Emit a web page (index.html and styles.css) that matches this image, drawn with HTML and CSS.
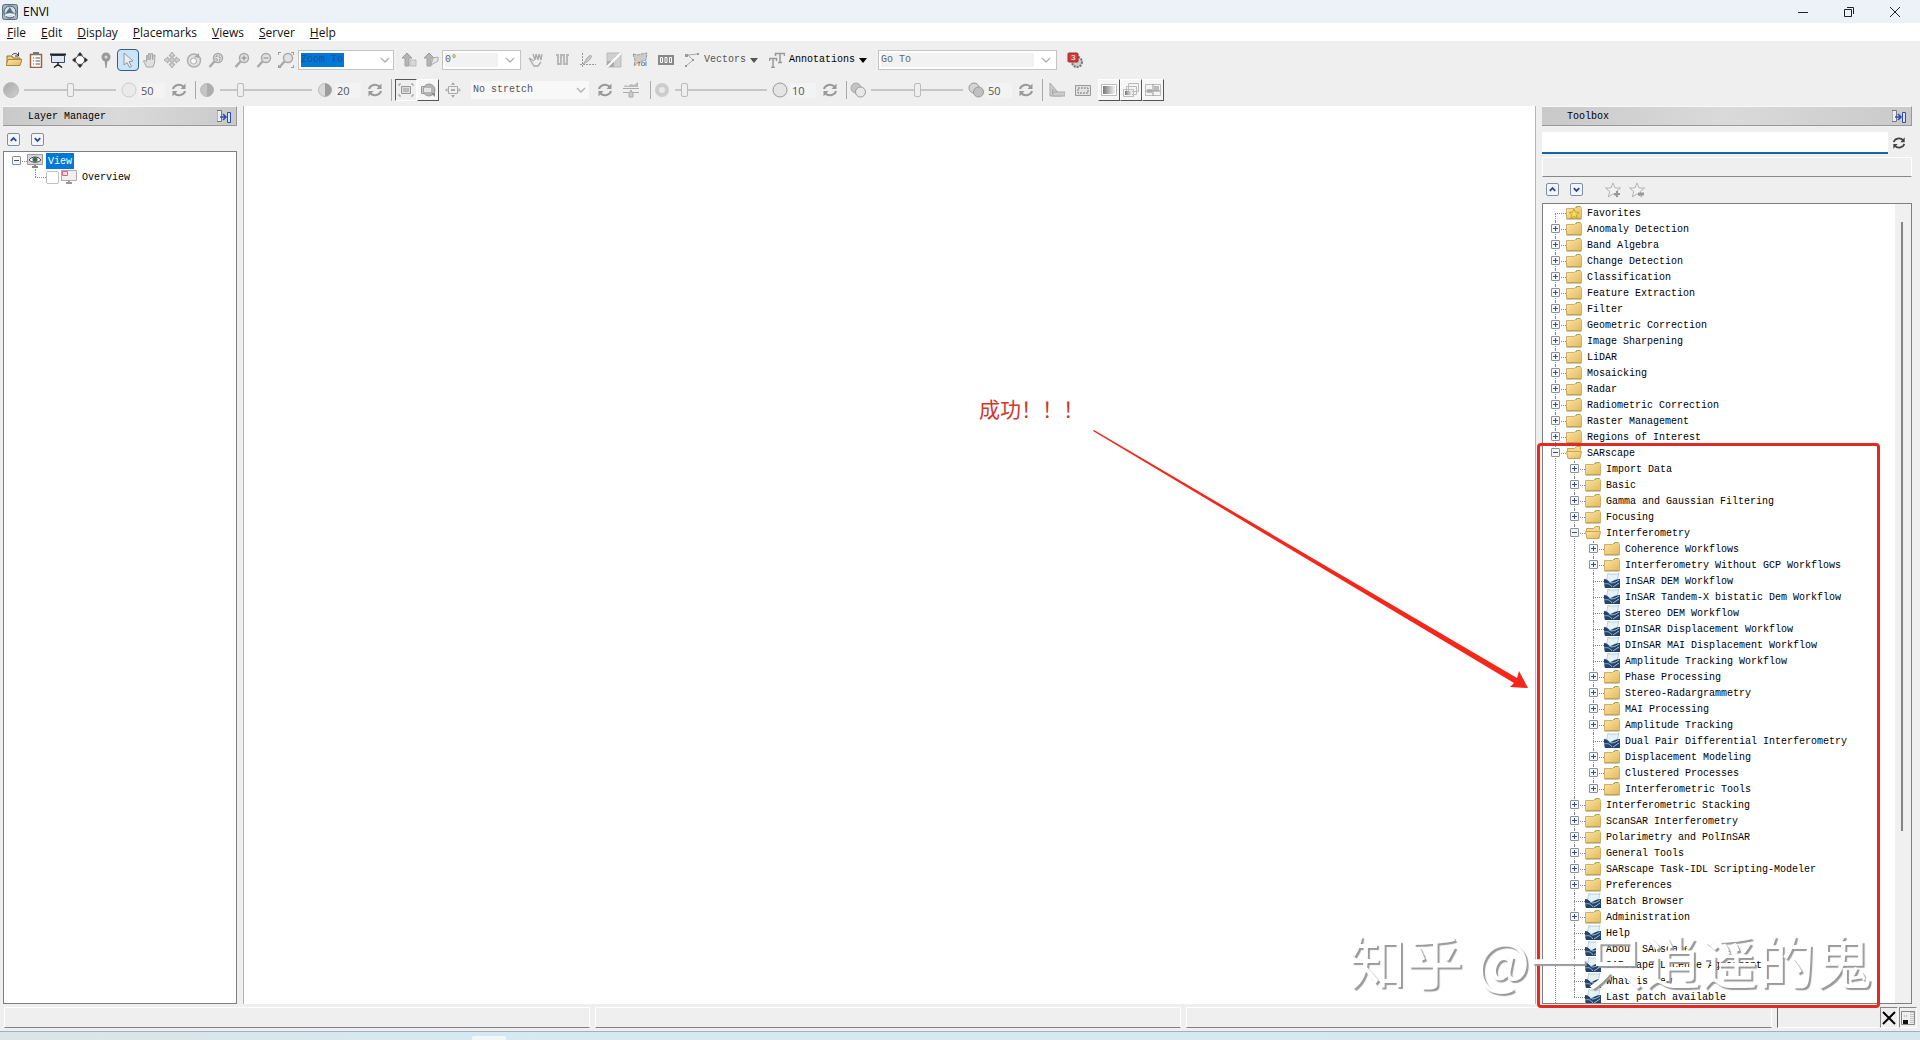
FILE: index.html
```html
<!DOCTYPE html>
<html lang="zh-CN">
<head>
    <meta charset="utf-8">
    <title>ENVI</title>
    <link rel="stylesheet" href="styles.css">
</head>
<body>
    <!-- shared icons -->
    <svg class="sprite" aria-hidden="true">
        <linearGradient id="gold" x1="0" y1="0" x2="1" y2="1"><stop offset="0" stop-color="#fbe7a6"/><stop offset="1" stop-color="#e3b95b"/></linearGradient>
        <linearGradient id="ball" x1="0" y1="0" x2="1" y2="1"><stop offset="0" stop-color="#a8a8a8"/><stop offset="1" stop-color="#d0d0d0"/></linearGradient>
        <linearGradient id="ramp"><stop offset="0" stop-color="#777"/><stop offset="1" stop-color="#f4f4f4"/></linearGradient>
        <symbol id="folder" viewBox="0 0 16 16"><path d="M.5 3.5h8l2-2h4l1 2v10H.5z" fill="url(#gold)" stroke="#d3b06a"/><path d="M10 3l1-1.5h3" fill="none" stroke="#8fae68"/><path d="M.5 14h15" stroke="#a9905a"/></symbol>
        <symbol id="folder-open" viewBox="0 0 16 16"><path d="M1.500 12.500v-9h7l2-2h4v4" fill="#f3d78b" stroke="#c9a254"/><path d="M.5 6.500h15l-1.500 7h-12z" fill="url(#gold)" stroke="#c9a254"/></symbol>
        <symbol id="fav" viewBox="0 0 16 16"><use href="#folder"/><path d="M8 4l1.400 3.200 3.600.3-2.700 2.300.8 3.500L8 11.400l-3.100 1.900.8-3.500L3 7.500l3.600-.3z" fill="#f5dc4a" stroke="#b99a1c" stroke-width=".8"/></symbol>
        <symbol id="tool" viewBox="0 0 16 16"><path d="M4 0l1 1h9l1-1-2 9H2z" fill="#e4f2f6" stroke="#a9c7d2" stroke-width=".8"/><path d="M0 6c3 0 5 2 6 4 2-2 6-4 10-4v9H1c-1-2-1-6-1-9z" fill="#24426c"/><path d="M0 11c4-1 6 0 8 3M7 10c3 0 5-1 8-3M9 14l6-4" stroke="#9ebbd3" fill="none"/></symbol>
        <symbol id="refresh" viewBox="0 0 16 16"><path d="M2 7c1-4 7-6 11-2M14 9c-1 4-7 6-11 2" fill="none" stroke="currentColor" stroke-width="2"/><path d="M14.500 1.500v5.500h-5zM1.500 14.500V9h5z" fill="currentColor"/></symbol>
        <symbol id="lens" viewBox="0 0 16 16"><circle cx="10" cy="6" r="4.500" fill="#e2e2e2" stroke="#a9a9a9" stroke-width="1.500"/><path d="M6.500 9.500L1.500 15" stroke="#a9a9a9" stroke-width="2.500"/></symbol>
        <symbol id="up" viewBox="0 0 12 12"><path d="M3 7.500l3-3 3 3" fill="none" stroke="#2b4a8f" stroke-width="2"/></symbol>
        <symbol id="down" viewBox="0 0 12 12"><path d="M3 4.500l3 3 3-3" fill="none" stroke="#2b4a8f" stroke-width="2"/></symbol>
        <symbol id="chev" viewBox="0 0 12 12"><path d="M2 4l4 4 4-4" fill="none" stroke="#b0b0b0" stroke-width="1.300"/></symbol>
        <symbol id="arrow-up" viewBox="0 0 16 16"><path d="M6 1l5 5H8v8H4V6H1z" fill="#b5b5b5" stroke="#a0a0a0"/></symbol>
        <symbol id="dock" viewBox="0 0 14 14"><path d="M0 1.500h4.500v11H0M0 2v10" fill="#eee" stroke="#777"/><path d="M3 8h5M6 5l3 3-3 3" fill="none" stroke="#2c4cb5" stroke-width="1.500"/><path d="M10.500 3.500h3v10h-3z" fill="#dfe5fa" stroke="#2c4cb5"/></symbol>
        <symbol id="half" viewBox="0 0 16 16"><circle cx="8" cy="8" r="6.500" fill="#d9d9d9" stroke="#bbb"/><path d="M8 1.500a6.500 6.500 0 010 13z" fill="#9c9c9c"/></symbol>
        <symbol id="half-left" viewBox="0 0 16 16"><circle cx="8" cy="8" r="6.500" fill="#c4c4c4" stroke="#bbb"/><path d="M8 1.500a6.500 6.500 0 010 13z" fill="#adadad"/></symbol>
        <symbol id="circles" viewBox="0 0 16 16"><circle cx="6" cy="6" r="5" fill="#c4c4c4" stroke="#aaa"/><circle cx="10.500" cy="10" r="5" fill="#e8e8e8" stroke="#999"/></symbol>
        <symbol id="circles-solid" viewBox="0 0 16 16"><circle cx="6" cy="6" r="5" fill="#d5d5d5" stroke="#999"/><circle cx="10.500" cy="10" r="5" fill="#c0c0c0" stroke="#999"/></symbol>
        <symbol id="star" viewBox="0 0 16 16"><path d="M8 1l2 5h5.500l-4.300 3.500 1.600 5.500L8 11.800 3.200 15l1.600-5.500L.5 6H6z" fill="#f2f2f2" stroke="#b3b3b3"/></symbol>
    </svg>

    <header class="titlebar">
        <svg class="logo" viewBox="0 0 16 16"><rect x=".5" y=".5" width="15" height="15" rx="2" fill="#9fb1bd" stroke="#5c7180"/><circle cx="8" cy="8" r="6" fill="#d5e0e6" stroke="#485e6d"/><path d="M3 10l5-7 2 4 3 3-5-1z" fill="#587081"/><path d="M3 12c3-2 7-2 10 0" stroke="#fff" fill="none"/></svg>
        <span>ENVI</span>
        <div class="window-buttons">
            <button aria-label="Minimize"><svg viewBox="0 0 12 12"><path d="M1 6.500h10"/></svg></button>
            <button aria-label="Restore"><svg viewBox="0 0 12 12"><path d="M1.500 3.500h7v7h-7zM4 1.500h6.500V8"/></svg></button>
            <button aria-label="Close"><svg viewBox="0 0 12 12"><path d="M1 1l10 10M11 1L1 11"/></svg></button>
        </div>
    </header>

    <nav class="menu">
        <a href="#"><u>F</u>ile</a>
        <a href="#"><u>E</u>dit</a>
        <a href="#"><u>D</u>isplay</a>
        <a href="#"><u>P</u>lacemarks</a>
        <a href="#"><u>V</u>iews</a>
        <a href="#"><u>S</u>erver</a>
        <a href="#"><u>H</u>elp</a>
    </nav>

    <div class="toolbar">
        <div class="tools">
            <div class="group">
                <button class="tool" aria-label="Open"><svg viewBox="0 0 16 16"><path d="M1 13V4h5l1 2h7v7z" fill="#f1cf7a" stroke="#8f7234"/><path d="M0 13.500l2-6h14l-2 6z" fill="url(#gold)" stroke="#a8853b"/><path d="M6 3c2-2 4-2 6 0M12.500.5V4H9" stroke="#333" fill="none"/></svg></button>
                <button class="tool" aria-label="Data Manager"><svg viewBox="0 0 16 16"><path d="M2.500 2.500h11v13h-11z" fill="#fff" stroke="#96643a" stroke-width="1.500"/><path d="M5 0h6v3H5z" fill="#777"/><path d="M5 6h1m1.500 0H12M5 9h1m1.500 0H12M5 12h1m1.500 0H12" stroke="#555"/></svg></button>
                <button class="tool" aria-label="Present"><svg viewBox="0 0 16 16"><path d="M1.500 3.500h13v7h-13z" fill="#dce9f3" stroke="#3b4b58"/><path d="M0 2.500h16" stroke="#222" stroke-width="2"/><path d="M8 10v4m-4 1.500l4-3 4 3" stroke="#222" stroke-width="1.500" fill="none"/></svg></button>
                <button class="tool" aria-label="Pan"><svg viewBox="0 0 16 16"><circle cx="8" cy="8" r="4.500" fill="#fff" stroke="#555"/><path d="M8 0l3 3.500H5zM8 16l3-3.500H5zM0 8l3.500-3v6zM16 8l-3.500-3v6z" fill="#333"/></svg></button>
            </div>
            <div class="group">
                <button class="tool" aria-label="Pin"><svg viewBox="0 0 16 16"><circle cx="8" cy="5" r="4.500" fill="#999"/><path d="M6.500 8h3L8.500 16h-1z" fill="#999"/><circle cx="8" cy="5" r="1.500" fill="#ddd"/></svg></button>
                <button class="tool active" aria-label="Select"><svg viewBox="0 0 16 16"><path d="M4 1l9 8-4 .5 2.500 5-2 1L7 10.500 4 13z" fill="#eee" stroke="#8e9aa6"/></svg></button>
                <button class="tool" aria-label="Hand"><svg viewBox="0 0 16 16"><path d="M4.500 15L1.500 9l1-1 2 2V3.500h1.500V8l.5-6.500H8V8l1-6.500h1.500V8l1-5H13l-.5 8-1.500 4z" fill="#e0e0e0" stroke="#a8a8a8"/></svg></button>
                <button class="tool" aria-label="Fly"><svg viewBox="0 0 16 16"><path d="M8 0l3 4H9v3h3V5l4 3-4 3V9H9v3h2l-3 4-3-4h2V9H4v2L0 8l4-3v2h3V4H5z" fill="#d0d0d0" stroke="#a0a0a0" stroke-width=".8"/></svg></button>
                <button class="tool" aria-label="Rotate"><svg viewBox="0 0 16 16"><circle cx="8" cy="8.500" r="6.500" fill="#e2e2e2" stroke="#b0b0b0" stroke-width="1.500"/><circle cx="7.500" cy="9" r="3" fill="#fff" stroke="#aaa"/><path d="M8 5l5-4v5z" fill="#aaa"/></svg></button>
                <button class="tool" aria-label="Zoom box"><svg viewBox="0 0 16 16"><use href="#lens"/><path d="M8 4h4v4H8z" fill="none" stroke="#888" stroke-dasharray="1.500 1"/></svg></button>
            </div>
            <div class="group">
                <button class="tool" aria-label="Zoom in"><svg viewBox="0 0 16 16"><use href="#lens"/><path d="M7.500 6h5M10 3.500v5" stroke="#888"/></svg></button>
                <button class="tool" aria-label="Zoom out"><svg viewBox="0 0 16 16"><use href="#lens"/><path d="M7.500 6h5" stroke="#888"/></svg></button>
                <button class="tool" aria-label="Full extent"><svg viewBox="0 0 16 16"><use href="#lens"/><path d="M0 3V0h3M13 0h3v3M16 13v3h-3M3 16H0v-3" fill="none" stroke="#888" stroke-width="1.500"/></svg></button>
            </div>
            <div class="combo zoom-combo">
                <input type="text" value="Zoom To" aria-label="Zoom To">
                <button aria-label="Zoom list"><svg><use href="#chev"/></svg></button>
            </div>
            <div class="group spaced">
                <button class="tool" aria-label="North up"><svg viewBox="0 0 16 16"><use href="#arrow-up"/><path d="M9 8h6v6H9z" fill="#d8d8d8" stroke="#bbb"/></svg></button>
                <button class="tool" aria-label="Rotate up"><svg viewBox="0 0 16 16"><use href="#arrow-up"/><path d="M8 13l2-7 5-1v4z" fill="#e6e6e6" stroke="#aaa"/></svg></button>
            </div>
            <div class="combo angle-combo">
                <input type="text" value="0°" aria-label="Rotation">
                <button aria-label="Rotation list"><svg><use href="#chev"/></svg></button>
            </div>
            <div class="group wide">
                <button class="tool" aria-label="Spectral hand"><svg viewBox="0 0 16 16"><path d="M1 6l5 8h4l3-4M1 6l5 3M5 2l2 6 1-6 2 6 1-6 2 6 1-6" fill="none" stroke="#aaa" stroke-width="1.300"/></svg></button>
                <button class="tool" aria-label="Profiles"><svg viewBox="0 0 16 16"><path d="M2 3h2v9h3V3h3v9h3V3h2" fill="none" stroke="#b8b8b8" stroke-width="2"/></svg></button>
                <button class="tool" aria-label="Scatter plot"><svg viewBox="0 0 16 16"><path d="M2.500 1v15M0 12.500h16" stroke="#999" stroke-dasharray="2 1"/><path d="M3 12c2-1 2-4 5-7 3-3 5-1 2 2-2 3-5 4-7 5z" fill="#ccc" stroke="#aaa"/></svg></button>
                <button class="tool" aria-label="Density slice"><svg viewBox="0 0 16 16"><path d="M1 1h14v14H1z" fill="#d0d0d0" stroke="#bbb"/><path d="M1 9h7v6H1z" fill="#aaa"/><path d="M1 15L15 1" stroke="#fff" stroke-width="2"/></svg></button>
                <button class="tool" aria-label="Region of interest"><svg viewBox="0 0 16 16"><path d="M1 2l5 1 3-1 6-1-1 7-7 2-5 4 1-6z" fill="#ccc" stroke="#999" stroke-dasharray="3 1"/><text x="6" y="14" font-size="8" font-family="Liberation Sans" fill="#555">roi</text></svg></button>
                <button class="tool" aria-label="Counter"><svg viewBox="0 0 16 16"><path d="M0 3h16v10H0z" fill="#888"/><path d="M2.500 5.500h2v5h-2zM7 5.500h2v5H7zM11.500 5.500h2v5h-2z" fill="#888" stroke="#fff"/></svg></button>
            </div>
            <button class="drop muted"><svg viewBox="0 0 16 16"><path d="M2 14l7-6-5-5 10-1" fill="none" stroke="#aaa"/><path d="M1 2h3v3H1zM13 1h2v2h-2zM8 7h2v2H8zM1 13h2v2H1z" fill="#999"/></svg>Vectors<i></i></button>
            <button class="drop"><svg viewBox="0 0 16 16"><path d="M6.500 4V1.500h9V4M11 2v8M9 10.500h4M.5 9V6.500h7V9M4 7v8M2 15.500h4" fill="none" stroke="#999" stroke-width="1.500"/></svg>Annotations<i></i></button>
            <div class="combo goto-combo">
                <input type="text" value="Go To" aria-label="Go To">
                <button aria-label="Go To list"><svg><use href="#chev"/></svg></button>
            </div>
            <button class="tool notice" aria-label="Notifications"><svg viewBox="0 0 16 16"><circle cx="10" cy="10" r="5" fill="#ccc" stroke="#777" stroke-width="2" stroke-dasharray="2 1"/><rect x="1" y="1" width="10" height="9" rx="1" fill="#cf3b3b" stroke="#a32626"/><text x="4" y="8" font-size="8" font-family="Liberation Sans" fill="#fff">3</text></svg></button>
        </div>

        <div class="tools">
            <div class="slider">
                <svg viewBox="0 0 16 16"><circle cx="8" cy="8" r="7.500" fill="url(#ball)" stroke="#bbb"/></svg>
                <input type="range" min="0" max="100" value="50" aria-label="Brightness">
                <svg viewBox="0 0 16 16"><circle cx="8" cy="8" r="7" fill="#eaeaea" stroke="#ccc"/></svg>
                <input type="text" value="50" aria-label="Brightness value">
                <button class="tool" aria-label="Reset brightness"><svg><use href="#refresh"/></svg></button>
            </div>
            <div class="slider">
                <svg><use href="#half-left"/></svg>
                <input type="range" min="0" max="100" value="20" aria-label="Contrast">
                <svg><use href="#half"/></svg>
                <input type="text" value="20" aria-label="Contrast value">
                <button class="tool" aria-label="Reset contrast"><svg><use href="#refresh"/></svg></button>
            </div>
            <div class="group toggles">
                <button class="tool pressed" aria-label="Stretch on view"><svg viewBox="0 0 16 16"><path d="M1 4V2h2M13 2h2v2M15 12v2h-2M3 14H1v-2" stroke="#999" fill="none"/><path d="M3.500 4.500h9v7h-9z" fill="#ddd" stroke="#999"/><path d="M5 6h6v4H5z" fill="#bbb"/></svg></button>
                <button class="tool raised" aria-label="Stretch on full"><svg viewBox="0 0 16 16"><path d="M1.500 4.500h8v7h-8z" fill="#ddd" stroke="#999"/><circle cx="9" cy="8" r="6" fill="#b5b5b5" stroke="#999"/><path d="M4 6h7v4H4z" fill="#e5e5e5"/><path d="M11 11h4v4z" fill="#888"/></svg></button>
            </div>
            <button class="tool fit" aria-label="Extents"><svg viewBox="0 0 16 16"><path d="M3.500 4.500h9v7h-9z" fill="#eee" stroke="#aaa"/><path d="M8 0l2 3H6zM8 16l2-3H6zM0 8l2.500-2v4zM16 8l-2.500-2v4zM6 7h4v2H6z" fill="#aaa"/></svg></button>
            <div class="stretch">
                <select aria-label="Stretch type"><option>No stretch</option></select>
                <svg><use href="#chev"/></svg>
            </div>
            <div class="group wide after-select">
                <button class="tool" aria-label="Update stretch"><svg><use href="#refresh"/></svg></button>
                <button class="tool" aria-label="Histogram"><svg viewBox="0 0 16 16"><path d="M0 6.500h16M0 10.500h16" stroke="#aaa"/><path d="M1 5l1-2 3 1 3-2 3 1 4-3v5z" fill="#bbb"/><path d="M6 12l2-4 2 4v3H6z" fill="#ccc" stroke="#aaa"/></svg></button>
            </div>
            <div class="slider lined">
                <svg viewBox="0 0 16 16"><circle cx="8" cy="8" r="5" fill="#e8e8e8" stroke="#ccc" stroke-width="4"/></svg>
                <input type="range" min="0" max="100" value="7" aria-label="Sharpen">
                <svg viewBox="0 0 16 16"><circle cx="8" cy="8" r="7" fill="#e4e4e4" stroke="#999"/></svg>
                <input type="text" value="10" aria-label="Sharpen value">
                <button class="tool" aria-label="Reset sharpen"><svg><use href="#refresh"/></svg></button>
            </div>
            <div class="slider">
                <svg><use href="#circles"/></svg>
                <input type="range" min="0" max="100" value="50" aria-label="Transparency">
                <svg><use href="#circles-solid"/></svg>
                <input type="text" value="50" aria-label="Transparency value">
                <button class="tool" aria-label="Reset transparency"><svg><use href="#refresh"/></svg></button>
            </div>
            <div class="group wide measure">
                <button class="tool" aria-label="Mensuration"><svg viewBox="0 0 16 16"><path d="M1 1v13h11zM3.500 7v5h4z" fill="#ccc" fill-rule="evenodd" stroke="#aaa"/><path d="M4 10h12v4H4z" fill="#ccc" stroke="#aaa"/></svg></button>
                <button class="tool" aria-label="Chip view"><svg viewBox="0 0 16 16"><path d="M.5 3.500h15v10H.5z" fill="#e2e2e2" stroke="#999"/><path d="M3 6h10v5H3z" fill="none" stroke="#777" stroke-dasharray="2 1"/></svg></button>
            </div>
            <div class="group portals">
                <button class="tool raised" aria-label="Portal"><svg viewBox="0 0 16 16"><path d="M.5 2.500h15v11H.5z" fill="#fff" stroke="#bbb"/><path d="M2 4h12v8H2z" fill="url(#ramp)"/></svg></button>
                <button class="tool raised" aria-label="Cascade"><svg viewBox="0 0 16 16"><path d="M5.500 1.500h10v8h-10zM3.500 4.500h10v8h-10zM.5 7.500h10v7H.5z" fill="#f4f4f4" stroke="#bbb"/><path d="M2 9h7v4H2z" fill="url(#ramp)"/></svg></button>
                <button class="tool raised" aria-label="Split"><svg viewBox="0 0 16 16"><path d="M.5 2.500h15v11H.5z" fill="#f4f4f4" stroke="#bbb"/><path d="M2 7h5v4H2zM9 4h5v5H9z" fill="#bbb"/><path d="M8 2v12M1 9h14" stroke="#999"/></svg></button>
            </div>
        </div>
    </div>

    <main class="workspace">
        <section class="panel layers">
            <h2 class="panel-title"><span>Layer Manager</span><button aria-label="Collapse Layer Manager"><svg><use href="#dock"/></svg></button></h2>
            <div class="panel-tools">
                <button class="mini" aria-label="Collapse all"><svg><use href="#up"/></svg></button>
                <button class="mini" aria-label="Expand all"><svg><use href="#down"/></svg></button>
            </div>
            <div class="tree-box">
                <ul class="tree">
                    <li class="open"><div class="row"><button class="toggle" aria-label="Collapse"></button><svg viewBox="0 0 16 16"><path d="M.5 1.500h15v10H.5z" fill="#d8d8d8" stroke="#999"/><path d="M5 14h6M8 12v2" stroke="#888" stroke-width="2"/><path d="M2 7c3-4 9-4 12 0-3 3-9 3-12 0z" fill="#fff" stroke="#444"/><circle cx="8" cy="6.500" r="2.500" fill="#44635c"/></svg><span class="selected">View</span></div>
                        <ul>
                            <li><div class="row"><label><input type="checkbox"><svg viewBox="0 0 16 16"><path d="M.5 1.500h15v10H.5z" fill="#f4eef0" stroke="#aaa"/><path d="M5 14h6M8 12v2" stroke="#999" stroke-width="2"/><path d="M1.500 2.500h5v4h-5z" fill="#fbd9e1" stroke="#e0608a"/></svg><span>Overview</span></label></div></li>
                        </ul>
                    </li>
                </ul>
            </div>
        </section>

        <section class="canvas">
            <p class="caption">成功！！！</p>
            <svg class="arrow" viewBox="0 0 436 260"><path d="M1 0L424 248l2-7 9 17-18-1 4-4L0 1z" fill="#f5271a"/></svg>
        </section>

        <section class="panel toolbox">
            <h2 class="panel-title"><span>Toolbox</span><button aria-label="Collapse Toolbox"><svg><use href="#dock"/></svg></button></h2>
            <div class="search">
                <input type="text" aria-label="Search tools">
                <button class="tool" aria-label="Refresh toolbox"><svg><use href="#refresh"/></svg></button>
            </div>
            <div class="result"></div>
            <div class="panel-tools">
                <button class="mini" aria-label="Collapse all"><svg><use href="#up"/></svg></button>
                <button class="mini" aria-label="Expand all"><svg><use href="#down"/></svg></button>
                <button class="star first" aria-label="Add favorite"><svg viewBox="0 0 16 16"><use href="#star"/><path d="M9 12h6M12 9v6" stroke="#999" stroke-width="2"/></svg></button>
                <button class="star" aria-label="Remove favorite"><svg viewBox="0 0 16 16"><use href="#star"/><path d="M9 12h6" stroke="#999" stroke-width="3"/></svg></button>
            </div>
            <div class="tree-box">
                <ul class="tree">
                    <li><div class="row"><svg><use href="#fav"/></svg><span>Favorites</span></div></li>
                    <li><div class="row"><button class="toggle plus" aria-label="Expand"></button><svg><use href="#folder"/></svg><span>Anomaly Detection</span></div></li>
                    <li><div class="row"><button class="toggle plus" aria-label="Expand"></button><svg><use href="#folder"/></svg><span>Band Algebra</span></div></li>
                    <li><div class="row"><button class="toggle plus" aria-label="Expand"></button><svg><use href="#folder"/></svg><span>Change Detection</span></div></li>
                    <li><div class="row"><button class="toggle plus" aria-label="Expand"></button><svg><use href="#folder"/></svg><span>Classification</span></div></li>
                    <li><div class="row"><button class="toggle plus" aria-label="Expand"></button><svg><use href="#folder"/></svg><span>Feature Extraction</span></div></li>
                    <li><div class="row"><button class="toggle plus" aria-label="Expand"></button><svg><use href="#folder"/></svg><span>Filter</span></div></li>
                    <li><div class="row"><button class="toggle plus" aria-label="Expand"></button><svg><use href="#folder"/></svg><span>Geometric Correction</span></div></li>
                    <li><div class="row"><button class="toggle plus" aria-label="Expand"></button><svg><use href="#folder"/></svg><span>Image Sharpening</span></div></li>
                    <li><div class="row"><button class="toggle plus" aria-label="Expand"></button><svg><use href="#folder"/></svg><span>LiDAR</span></div></li>
                    <li><div class="row"><button class="toggle plus" aria-label="Expand"></button><svg><use href="#folder"/></svg><span>Mosaicking</span></div></li>
                    <li><div class="row"><button class="toggle plus" aria-label="Expand"></button><svg><use href="#folder"/></svg><span>Radar</span></div></li>
                    <li><div class="row"><button class="toggle plus" aria-label="Expand"></button><svg><use href="#folder"/></svg><span>Radiometric Correction</span></div></li>
                    <li><div class="row"><button class="toggle plus" aria-label="Expand"></button><svg><use href="#folder"/></svg><span>Raster Management</span></div></li>
                    <li><div class="row"><button class="toggle plus" aria-label="Expand"></button><svg><use href="#folder"/></svg><span>Regions of Interest</span></div></li>
                    <li class="more"><div class="row"><button class="toggle" aria-label="Collapse"></button><svg><use href="#folder-open"/></svg><span>SARscape</span></div>
                        <ul>
                            <li><div class="row"><button class="toggle plus" aria-label="Expand"></button><svg><use href="#folder"/></svg><span>Import Data</span></div></li>
                            <li><div class="row"><button class="toggle plus" aria-label="Expand"></button><svg><use href="#folder"/></svg><span>Basic</span></div></li>
                            <li><div class="row"><button class="toggle plus" aria-label="Expand"></button><svg><use href="#folder"/></svg><span>Gamma and Gaussian Filtering</span></div></li>
                            <li><div class="row"><button class="toggle plus" aria-label="Expand"></button><svg><use href="#folder"/></svg><span>Focusing</span></div></li>
                            <li><div class="row"><button class="toggle" aria-label="Collapse"></button><svg><use href="#folder-open"/></svg><span>Interferometry</span></div>
                                <ul>
                                    <li><div class="row"><button class="toggle plus" aria-label="Expand"></button><svg><use href="#folder"/></svg><span>Coherence Workflows</span></div></li>
                                    <li><div class="row"><button class="toggle plus" aria-label="Expand"></button><svg><use href="#folder"/></svg><span>Interferometry Without GCP Workflows</span></div></li>
                                    <li><div class="row"><svg><use href="#tool"/></svg><span>InSAR DEM Workflow</span></div></li>
                                    <li><div class="row"><svg><use href="#tool"/></svg><span>InSAR Tandem-X bistatic Dem Workflow</span></div></li>
                                    <li><div class="row"><svg><use href="#tool"/></svg><span>Stereo DEM Workflow</span></div></li>
                                    <li><div class="row"><svg><use href="#tool"/></svg><span>DInSAR Displacement Workflow</span></div></li>
                                    <li><div class="row"><svg><use href="#tool"/></svg><span>DInSAR MAI Displacement Workflow</span></div></li>
                                    <li><div class="row"><svg><use href="#tool"/></svg><span>Amplitude Tracking Workflow</span></div></li>
                                    <li><div class="row"><button class="toggle plus" aria-label="Expand"></button><svg><use href="#folder"/></svg><span>Phase Processing</span></div></li>
                                    <li><div class="row"><button class="toggle plus" aria-label="Expand"></button><svg><use href="#folder"/></svg><span>Stereo-Radargrammetry</span></div></li>
                                    <li><div class="row"><button class="toggle plus" aria-label="Expand"></button><svg><use href="#folder"/></svg><span>MAI Processing</span></div></li>
                                    <li><div class="row"><button class="toggle plus" aria-label="Expand"></button><svg><use href="#folder"/></svg><span>Amplitude Tracking</span></div></li>
                                    <li><div class="row"><svg><use href="#tool"/></svg><span>Dual Pair Differential Interferometry</span></div></li>
                                    <li><div class="row"><button class="toggle plus" aria-label="Expand"></button><svg><use href="#folder"/></svg><span>Displacement Modeling</span></div></li>
                                    <li><div class="row"><button class="toggle plus" aria-label="Expand"></button><svg><use href="#folder"/></svg><span>Clustered Processes</span></div></li>
                                    <li><div class="row"><button class="toggle plus" aria-label="Expand"></button><svg><use href="#folder"/></svg><span>Interferometric Tools</span></div></li>
                                </ul>
                            </li>
                            <li><div class="row"><button class="toggle plus" aria-label="Expand"></button><svg><use href="#folder"/></svg><span>Interferometric Stacking</span></div></li>
                            <li><div class="row"><button class="toggle plus" aria-label="Expand"></button><svg><use href="#folder"/></svg><span>ScanSAR Interferometry</span></div></li>
                            <li><div class="row"><button class="toggle plus" aria-label="Expand"></button><svg><use href="#folder"/></svg><span>Polarimetry and PolInSAR</span></div></li>
                            <li><div class="row"><button class="toggle plus" aria-label="Expand"></button><svg><use href="#folder"/></svg><span>General Tools</span></div></li>
                            <li><div class="row"><button class="toggle plus" aria-label="Expand"></button><svg><use href="#folder"/></svg><span>SARscape Task-IDL Scripting-Modeler</span></div></li>
                            <li><div class="row"><button class="toggle plus" aria-label="Expand"></button><svg><use href="#folder"/></svg><span>Preferences</span></div></li>
                            <li><div class="row"><svg><use href="#tool"/></svg><span>Batch Browser</span></div></li>
                            <li><div class="row"><button class="toggle plus" aria-label="Expand"></button><svg><use href="#folder"/></svg><span>Administration</span></div></li>
                            <li><div class="row"><svg><use href="#tool"/></svg><span>Help</span></div></li>
                            <li><div class="row"><svg><use href="#tool"/></svg><span>About SARscape</span></div></li>
                            <li><div class="row"><svg><use href="#tool"/></svg><span>SARscape License Agreement</span></div></li>
                            <li><div class="row"><svg><use href="#tool"/></svg><span>What is new</span></div></li>
                            <li><div class="row"><svg><use href="#tool"/></svg><span>Last patch available</span></div></li>
                        </ul>
                    </li>
                </ul>
                <div class="scrollbar"><div class="thumb"></div></div>
            </div>
            <div class="highlight"></div>
        </section>
    </main>

    <footer class="status">
        <div class="cell"></div>
        <div class="cell"></div>
        <div class="cell"></div>
        <div class="progress"></div>
        <button aria-label="Cancel"><svg viewBox="0 0 16 16"><path d="M2 2l12 12M14 2L2 14" stroke="#000" stroke-width="2"/></svg></button>
        <button aria-label="Processes"><svg viewBox="0 0 16 16"><path d="M1.500 1.500h13v13h-13z" fill="#eee" stroke="#888"/><path d="M3 10h5v4H3z" fill="#111"/><path d="M11 2v12M13 2v12M4 6h3" stroke="#999" stroke-dasharray="1 1"/></svg></button>
    </footer>
    <div class="taskbar"><span></span></div>

    <div class="watermark">知乎 @一只逍遥的鬼</div>
</body>
</html>
```

FILE: styles.css
```css
* {
    box-sizing: border-box;
}
body {
    margin: 0;
    height: 100vh;
    display: flex;
    flex-direction: column;
    position: relative;
    overflow: hidden;
    background: #efefef;
    color: #000;
    font: 10px/16px "Liberation Mono", "Noto Sans CJK SC", monospace;
}
button, input, select {
    margin: 0;
    padding: 0;
    border: 0;
    background: none;
    font: inherit;
    color: inherit;
    border-radius: 0;
    outline: 0;
}
svg {
    display: block;
    flex: none;
    width: 16px;
    height: 16px;
}
.sprite {
    position: absolute;
    width: 0;
    height: 0;
}

/* title and menu */
.titlebar {
    display: flex;
    align-items: center;
    height: 23px;
    flex: none;
    padding-left: 2px;
    gap: 5px;
    background: #edf2f8;
    font: 12px/23px "Open Sans", sans-serif;
}
.window-buttons {
    display: flex;
    margin-left: auto;
    padding-right: 2px;
}
.window-buttons button {
    display: flex;
    justify-content: center;
    align-items: center;
    width: 46px;
    height: 20px;
}
.window-buttons svg {
    width: 12px;
    height: 12px;
    fill: none;
    stroke: #222;
}
.menu {
    display: flex;
    gap: 15px;
    height: 18px;
    flex: none;
    padding-left: 7px;
    background: #fff;
    font: 12px/20px "Open Sans", sans-serif;
}
.menu a {
    color: #111;
    text-decoration: none;
}

/* toolbar */
.toolbar {
    display: flex;
    flex-direction: column;
    gap: 8px;
    flex: none;
    height: 65px;
    padding-top: 8px;
}
.tools {
    display: flex;
    align-items: center;
    height: 22px;
}
.tools:first-child {
    padding-left: 3px;
}
.group {
    display: flex;
}
.group + .group {
    margin-left: 4px;
}
.wide {
    gap: 4px;
}
.spaced {
    margin-left: 4px;
}
.angle-combo + .wide {
    margin-left: 4px;
}
.tool {
    display: flex;
    align-items: center;
    justify-content: center;
    flex: none;
    width: 22px;
    height: 22px;
    color: #999;
}
.active {
    border: 1px solid #2f5d8f;
    border-radius: 4px;
    background: #cce4f7;
}
.combo {
    display: flex;
    align-items: center;
    height: 20px;
    padding: 2px;
    border: 1px solid #c4c4c4;
    background: #fff;
    color: #666;
}
.combo input {
    flex: 1;
    min-width: 0;
    height: 14px;
    background: #f2f2f2;
}
.combo button {
    margin-left: auto;
}
.combo svg, .stretch svg {
    width: 12px;
    height: 12px;
}
.zoom-combo {
    width: 96px;
    margin-left: 1px;
}
.zoom-combo input {
    flex: none;
    width: 43px;
    background: #0078d7;
    color: #1b568c;
}
.angle-combo {
    width: 79px;
}
.goto-combo {
    width: 179px;
    margin-left: 11px;
}
.angle-combo button, .goto-combo button {
    padding: 0 2px 0 6px;
}
.drop {
    display: flex;
    align-items: center;
    gap: 4px;
    margin-left: 7px;
    line-height: 18px;
}
.muted {
    color: #555;
}
.drop i {
    border: 4px solid transparent;
    border-top: 5px solid currentColor;
    border-bottom: 0;
}
.drop + .drop {
    margin-left: 11px;
}
.notice {
    margin-left: 7px;
}

.slider {
    display: flex;
    align-items: center;
    height: 18px;
    width: 196px;
    padding-left: 3px;
    flex: none;
}
.slider + .slider, .lined, .toggles, .measure {
    box-shadow: -1px 0 0 #aaa;
}
.slider input[type="range"] {
    appearance: none;
    width: 92px;
    height: 16px;
    margin: 0 5px;
}
.slider input[type="range"]::-webkit-slider-runnable-track {
    height: 2px;
    background: #c6c6c6;
}
.slider input[type="range"]::-webkit-slider-thumb {
    appearance: none;
    width: 7px;
    height: 14px;
    margin-top: -6px;
    border: 1px solid #bbb;
    border-radius: 2px;
    background: #efefef;
}
.slider input[type="text"] {
    width: 26px;
    height: 15px;
    margin-left: 2px;
    padding-left: 2px;
    background: #f3f3f3;
    color: #555;
    font: 11px/15px "Open Sans", sans-serif;
}
.slider .tool {
    margin-left: 3px;
}
.toggles {
    padding-left: 3px;
}
.pressed {
    border: 1px solid #fff;
    border-top-color: #555;
    border-left-color: #555;
}
.raised {
    border: 1px solid #fff;
    border-right-color: #555;
    border-bottom-color: #555;
    background: #f6f6f6;
}
.fit {
    margin: 0 7px 0 3px;
}
.stretch {
    display: flex;
    align-items: center;
    position: relative;
    width: 118px;
    height: 18px;
    background: #f8f8f8;
    color: #555;
}
.stretch select {
    appearance: none;
    width: 100%;
    padding-left: 2px;
}
.stretch svg {
    position: absolute;
    right: 2px;
    pointer-events: none;
}
.after-select {
    margin: 0 9px 0 5px;
}
.measure {
    padding-left: 3px;
}

/* workspace */
.workspace {
    display: grid;
    grid-template-columns: 243px 1fr 384px;
    flex: 1;
    min-height: 0;
}
.canvas {
    position: relative;
    border-left: 1px solid #b5b5b5;
    border-right: 1px solid #b5b5b5;
    background: #fff;
}
.caption {
    position: absolute;
    top: 287px;
    right: 451px;
    margin: 0;
    color: #d2372c;
    font: 21px/30px "Noto Sans CJK SC", sans-serif;
}
.arrow {
    position: absolute;
    top: 324px;
    right: 6px;
    width: 436px;
    height: 260px;
}
.panel {
    display: flex;
    flex-direction: column;
    min-height: 0;
    position: relative;
}
.layers {
    padding: 0 6px 0 3px;
}
.toolbox {
    padding: 0 8px 0 6px;
}
.panel-title {
    display: flex;
    align-items: center;
    justify-content: space-between;
    flex: none;
    height: 20px;
    margin: 0;
    padding: 0 5px 0 25px;
    border-top: 1px solid #f8f8f8;
    border-right: 1px solid #999;
    border-bottom: 1px solid #999;
    background: linear-gradient(90deg, #c9c9c9, #dadada 50%, #cacaca);
    font-size: 10px;
    font-weight: normal;
}
.panel-title span, .row span {
    padding-top: 2px;
}
.panel-title svg {
    width: 14px;
    height: 14px;
}
.panel-tools {
    display: flex;
    align-items: center;
    gap: 11px;
    height: 25px;
    flex: none;
    padding-left: 4px;
}
.layers .panel-tools {
    padding-top: 2px;
}
.mini {
    width: 13px;
    height: 13px;
    border: 1px solid #7f8ea8;
    border-radius: 2px;
    background: #f4f6fb;
}
.mini svg {
    width: 11px;
    height: 11px;
}
.star.first {
    margin-left: 11px;
}
.star + .star {
    margin-left: -3px;
}
.search {
    display: flex;
    align-items: center;
    flex: none;
    height: 22px;
    margin-top: 6px;
}
.search input {
    flex: 1;
    height: 22px;
    border-bottom: 2px solid #1466a6;
    background: #fff;
}
.search .tool {
    color: #444;
    margin-right: 2px;
}
.search svg {
    width: 14px;
    height: 14px;
}
.result {
    flex: none;
    height: 20px;
    margin-top: 3px;
    border: 1px solid #fff;
    border-bottom-color: #888;
}
.toolbox .tree-box {
    margin-top: 1px;
}
.tree-box {
    display: flex;
    flex: 1;
    min-height: 0;
    overflow: hidden;
    border: 1px solid #7f7f7f;
    background: #fff;
}
.tree, .tree ul {
    margin: 0;
    padding: 0;
    list-style: none;
}
.tree {
    flex: 1;
    padding: 1px 0 0 8px;
}
.tree ul {
    padding-left: 19px;
}
.tree li {
    position: relative;
}
/* dotted guides of the tree */
.tree li::before {
    content: "";
    position: absolute;
    left: 4px;
    top: 0;
    bottom: 0;
    border-left: 1px dotted #888;
}
.tree > li:first-child::before {
    top: 8px;
}
.tree li:last-child:not(.more)::before {
    bottom: auto;
    height: 8px;
}
.layers .tree > li::before {
    display: none;
}
.row {
    display: flex;
    align-items: center;
    position: relative;
    height: 16px;
    padding-left: 15px;
    white-space: nowrap;
}
.row::before {
    content: "";
    position: absolute;
    left: 4px;
    top: 8px;
    width: 11px;
    border-top: 1px dotted #888;
}
.row span {
    height: 16px;
    padding: 1px 2px 0;
    margin-left: 3px;
    line-height: 15px;
}
.row label {
    display: flex;
    align-items: center;
}
.row input {
    appearance: none;
    width: 13px;
    height: 13px;
    margin-right: 2px;
    border: 1px solid #c0c0c0;
    border-radius: 2px;
    background: #fff;
}
.row .selected {
    background: #0078d7;
    color: #fff;
}
.toggle {
    position: absolute;
    left: 0;
    top: 3px;
    width: 9px;
    height: 9px;
    border: 1px solid #8a8f98;
    border-radius: 1px;
    background: linear-gradient(#33507f, #33507f) center / 5px 1px no-repeat, #f6f6f6;
}
.toggle.plus {
    background: linear-gradient(#33507f, #33507f) center / 5px 1px no-repeat, linear-gradient(#33507f, #33507f) center / 1px 5px no-repeat, #f6f6f6;
}
.scrollbar {
    width: 16px;
    padding: 18px 6px 0;
    background: #f0f0f0;
}
.thumb {
    width: 2px;
    height: 78%;
    background: #858585;
}
.highlight {
    position: absolute;
    top: 337px;
    left: 1px;
    right: 40px;
    bottom: -4px;
    border: 3px solid #e32a20;
    border-radius: 4px;
    z-index: 1;
}

/* status bar */
.status {
    display: flex;
    flex: none;
    height: 28px;
    padding: 3px 3px 3px 4px;
    border-bottom: 1px solid #a4b0b5;
}
.cell {
    flex: 1;
    margin-right: 5px;
    border: 1px solid #fff;
    border-bottom-color: #808080;
}
.progress {
    width: 102px;
    border-left: 1px solid #666;
    border-bottom: 1px solid #fff;
}
.status button {
    width: 18px;
    margin-left: 1px;
    border: 1px solid #fff;
    border-top-color: #888;
    border-left-color: #888;
}
.taskbar {
    flex: none;
    height: 8px;
    padding: 4px 0 0 472px;
    background: linear-gradient(90deg, #d9e5e8, #d6e9f1 30%, #d6e6ee);
}
.taskbar span {
    display: block;
    width: 34px;
    height: 4px;
    border-radius: 2px 2px 0 0;
    background: #f1f8fb;
}

.watermark {
    position: absolute;
    right: 48px;
    bottom: 45px;
    z-index: 2;
    color: #fff;
    font: 57px/72px "Noto Sans CJK SC", sans-serif;
    text-shadow: 2px 2px 1px #999;
    pointer-events: none;
}
```
